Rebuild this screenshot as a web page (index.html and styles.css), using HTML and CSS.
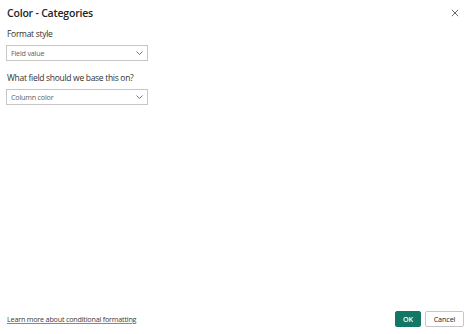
FILE: index.html
```html
<!DOCTYPE html>
<html>
<head>
<meta charset="utf-8">
<link rel="stylesheet" href="styles.css">
</head>
<body>
<div class="dialog">
  <div class="header">
    <h1 class="title">Color - Categories</h1>
    <button class="close" aria-label="Close">
      <svg width="8" height="8" viewBox="0 0 8 8"><path d="M0.8 0.8L7.2 7.2M7.2 0.8L0.8 7.2" stroke="#555" stroke-width="0.9"/></svg>
    </button>
  </div>
  <div class="body">
    <div class="field">
      <label class="label">Format style</label>
      <div class="select"><span>Field value</span>
        <svg class="chev" width="7" height="4" viewBox="0 0 7 4"><path d="M0.5 0.5L3.5 3.5L6.5 0.5" fill="none" stroke="#666" stroke-width="0.9"/></svg>
      </div>
    </div>
    <div class="field">
      <label class="label">What field should we base this on?</label>
      <div class="select"><span>Column color</span>
        <svg class="chev" width="7" height="4" viewBox="0 0 7 4"><path d="M0.5 0.5L3.5 3.5L6.5 0.5" fill="none" stroke="#666" stroke-width="0.9"/></svg>
      </div>
    </div>
  </div>
  <div class="footer">
    <a class="link" href="#">Learn more about conditional formatting</a>
    <div class="buttons">
      <button class="btn ok">OK</button>
      <button class="btn cancel">Cancel</button>
    </div>
  </div>
</div>
</body>
</html>
```
FILE: styles.css
```css
html, body { margin: 0; padding: 0; background: #fff; }
body { font-family: "Open Sans", "Noto Sans", sans-serif; color: #252423; width: 474px; height: 334px; overflow: hidden; }
.dialog { display: flex; flex-direction: column; height: 334px; box-sizing: border-box; padding: 4px 10px 7px 7px; }
.header { display: flex; justify-content: space-between; align-items: center; height: 18px; }
.title { margin: 0; font-size: 10.5px; font-weight: 600; letter-spacing: -0.2px; color: #252423; line-height: 18px; }
.close { border: 0; background: none; padding: 0; width: 16px; height: 16px; display: flex; align-items: center; justify-content: center; margin-right: 1px; }
.body { flex: 1; padding-top: 6px; }
.field { display: flex; flex-direction: column; margin-bottom: 11px; }
.label { font-size: 8.5px; color: #323130; margin-bottom: 5px; line-height: 12px; letter-spacing: -0.3px; }
.select { width: 142px; height: 16px; box-sizing: border-box; border: 1px solid #c8c6c4; margin-left: -1px; display: flex; align-items: center; justify-content: space-between; padding: 0 4px 0 4px; font-size: 7.2px; letter-spacing: -0.2px; color: #605e5c; }
.chev { display: block; }
.footer { display: flex; justify-content: space-between; align-items: center; }
.link { font-size: 7.2px; letter-spacing: -0.2px; color: #3b3a39; text-decoration: underline; text-decoration-color: #8a8886; }
.buttons { display: flex; gap: 4px; }
.btn { font-family: inherit; font-size: 7.2px; letter-spacing: -0.1px; height: 16px; border-radius: 2px; padding: 0; }
.ok { background: #117865; color: #fff; border: 1px solid #117865; width: 26px; font-weight: 600; }
.cancel { background: #fff; color: #252423; border: 1px solid #c8c6c4; width: 39px; }
```
